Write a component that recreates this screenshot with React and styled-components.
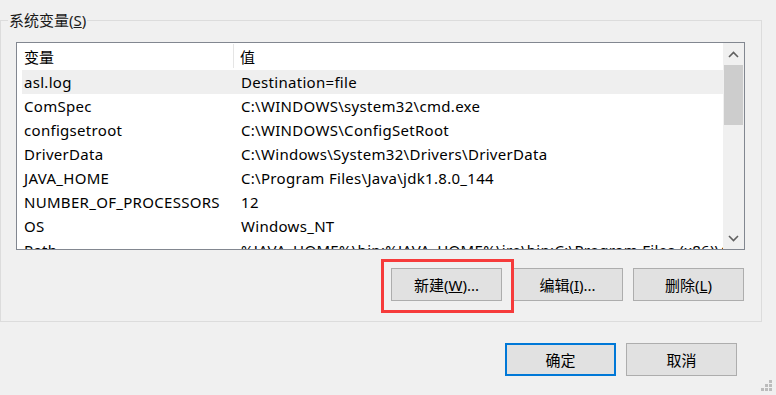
import React from 'react';
import styled, { createGlobalStyle } from 'styled-components';

const GlobalStyle = createGlobalStyle`
  html, body {
    margin: 0;
    padding: 0;
    background: #f0f0f0;
  }
  * {
    box-sizing: border-box;
  }
`;

const variables = [
  { name: 'asl.log', value: 'Destination=file', selected: true },
  { name: 'ComSpec', value: 'C:\\WINDOWS\\system32\\cmd.exe' },
  { name: 'configsetroot', value: 'C:\\WINDOWS\\ConfigSetRoot' },
  { name: 'DriverData', value: 'C:\\Windows\\System32\\Drivers\\DriverData' },
  { name: 'JAVA_HOME', value: 'C:\\Program Files\\Java\\jdk1.8.0_144' },
  { name: 'NUMBER_OF_PROCESSORS', value: '12' },
  { name: 'OS', value: 'Windows_NT' },
  { name: 'Path', value: '%JAVA_HOME%\\bin;%JAVA_HOME%\\jre\\bin;C:\\Program Files (x86)\\Common Files' },
];

const Chevron = ({ down }) => (
  <svg width="11" height="7" viewBox="0 0 11 7">
    <path
      d={down ? 'M1 1 L5.5 5.5 L10 1' : 'M1 6 L5.5 1.5 L10 6'}
      fill="none"
      stroke="#606060"
      strokeWidth="1.6"
    />
  </svg>
);

const SizeGrip = () => (
  <svg width="14" height="14" viewBox="0 0 14 14">
    {[
      [8, 0],
      [4, 4],
      [8, 4],
      [0, 8],
      [4, 8],
      [8, 8],
    ].map(([x, y]) => (
      <rect key={`${x}-${y}`} x={x} y={y} width="3" height="3" fill="#bcbcbc" />
    ))}
  </svg>
);

const App = () => {
  return (
    <>
      <GlobalStyle />
      <StyleWindow>
        <StyleGroup>
          <StyleLegend>
            系统变量(<u>S</u>)
          </StyleLegend>
          <StyleListView>
            <StyleListContent>
              <StyleHeader>
                <StyleHeaderCell>变量</StyleHeaderCell>
                <StyleHeaderCell $last>值</StyleHeaderCell>
              </StyleHeader>
              {variables.map((item) => (
                <StyleRow key={item.name} $selected={item.selected}>
                  <StyleCell>{item.name}</StyleCell>
                  <StyleCell $value>{item.value}</StyleCell>
                </StyleRow>
              ))}
            </StyleListContent>
            <StyleScrollBar>
              <StyleScrollArrow>
                <Chevron />
              </StyleScrollArrow>
              <StyleScrollTrack>
                <StyleThumb />
              </StyleScrollTrack>
              <StyleScrollArrow>
                <Chevron down />
              </StyleScrollArrow>
            </StyleScrollBar>
          </StyleListView>
          <StyleButtonRow>
            <StyleMarked>
              <StyleButton>
                新建(<u>W</u>)...
              </StyleButton>
            </StyleMarked>
            <StyleButton>
              编辑(<u>I</u>)...
            </StyleButton>
            <StyleButton>
              删除(<u>L</u>)
            </StyleButton>
          </StyleButtonRow>
        </StyleGroup>
        <StyleDialogRow>
          <StyleButton $default>确定</StyleButton>
          <StyleButton>取消</StyleButton>
        </StyleDialogRow>
        <StyleGrip>
          <SizeGrip />
        </StyleGrip>
      </StyleWindow>
    </>
  );
};

export default App;

const FONT = `"Noto Sans", "Noto Sans CJK SC", sans-serif`;

const StyleWindow = styled.div`
  position: relative;
  width: 776px;
  height: 395px;
  overflow: hidden;
  padding-top: 10px;
  display: flex;
  flex-direction: column;
  font-family: ${FONT};
  font-size: 15px;
  color: #000;
`;

const StyleGroup = styled.fieldset`
  width: 761px;
  margin: 0;
  padding: 12px 16px 20px 15px;
  border: 1px solid #dcdcdc;
  display: flex;
  flex-direction: column;
`;

const StyleLegend = styled.legend`
  margin-left: -8px;
  padding: 0 1px;
  height: 20px;
  line-height: 20px;
  font-size: 15px;
  color: #1a1a1a;
`;

const StyleListView = styled.div`
  display: flex;
  width: 729px;
  height: 208px;
  background: #fff;
  border: 1px solid #828790;
`;

const StyleListContent = styled.div`
  flex: 1;
  overflow: hidden;
  display: flex;
  flex-direction: column;
`;

const StyleHeader = styled.div`
  display: grid;
  grid-template-columns: 217px 1fr;
  height: 27px;
  flex-shrink: 0;
`;

const StyleHeaderCell = styled.div`
  display: flex;
  align-items: center;
  padding-left: ${(p) => (p.$last ? '6px' : '7px')};
  border-right: ${(p) => (p.$last ? 'none' : '1px solid #e5e5e5')};
  margin-top: 1px;
  margin-bottom: 2px;
`;

const StyleRow = styled.div`
  display: grid;
  grid-template-columns: 212px 1fr;
  height: 24px;
  flex-shrink: 0;
  margin-left: 5px;
  background: ${(p) => (p.$selected ? '#efefef' : 'transparent')};
`;

const StyleCell = styled.div`
  display: flex;
  align-items: center;
  padding-left: ${(p) => (p.$value ? '7px' : '2px')};
  white-space: nowrap;
  overflow: hidden;
  letter-spacing: 0.3px;
`;

const StyleScrollBar = styled.div`
  width: 21px;
  display: flex;
  flex-direction: column;
  background: #f0f0f0;
`;

const StyleScrollArrow = styled.div`
  height: 22px;
  display: flex;
  align-items: center;
  justify-content: center;
`;

const StyleScrollTrack = styled.div`
  flex: 1;
  padding: 0 1px;
`;

const StyleThumb = styled.div`
  height: 60px;
  background: #cdcdcd;
`;

const StyleButtonRow = styled.div`
  display: flex;
  justify-content: flex-end;
  gap: 10px;
  margin-top: 18px;
  padding-right: 1px;
`;

const StyleMarked = styled.div`
  position: relative;
  display: flex;

  &::after {
    content: '';
    position: absolute;
    top: -9px;
    left: -10px;
    right: -12px;
    bottom: -12px;
    border: 3px solid #f63b3b;
    pointer-events: none;
  }
`;

const StyleButton = styled.button`
  width: 111px;
  height: 33px;
  padding: 0;
  background: #e1e1e1;
  border: ${(p) => (p.$default ? '2px solid #0078d7' : '1px solid #adadad')};
  font-family: ${FONT};
  font-size: 15px;
  color: #000;
  display: flex;
  align-items: center;
  justify-content: center;
`;

const StyleDialogRow = styled.div`
  display: flex;
  justify-content: flex-end;
  gap: 10px;
  margin-top: 21px;
  padding-right: 39px;
`;

const StyleGrip = styled.div`
  position: absolute;
  right: 1px;
  bottom: 1px;
  display: flex;
`;
